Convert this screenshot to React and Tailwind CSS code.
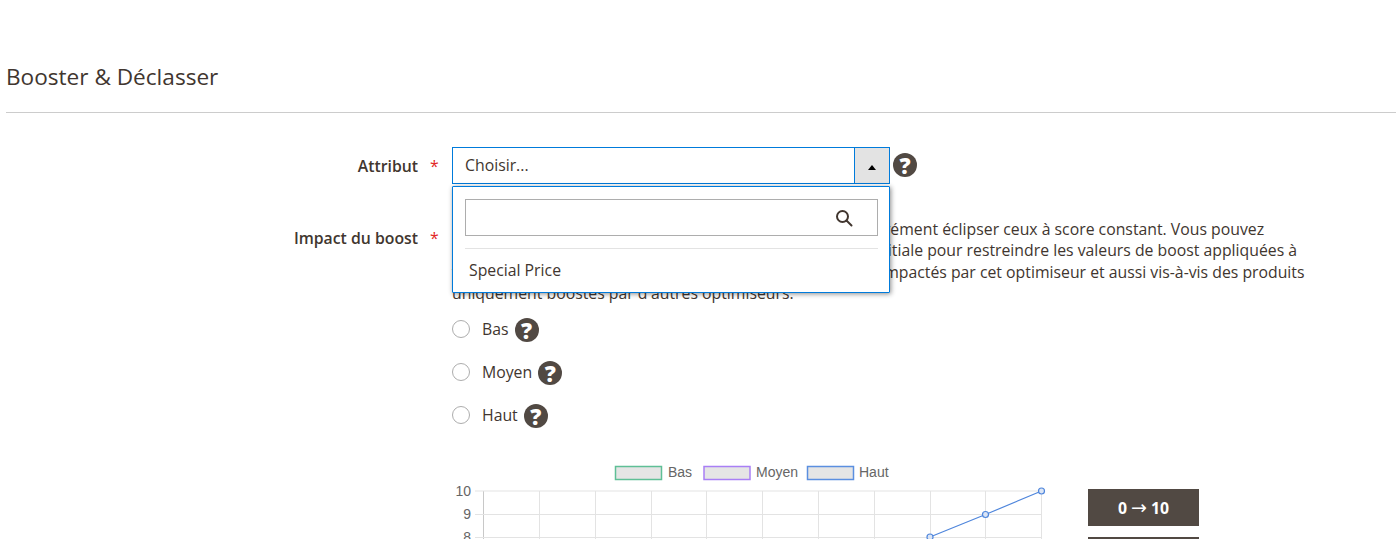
import React from "react";

const font = { fontFamily: '"Open Sans", sans-serif' };

function Help({ className = "" }) {
  return (
    <span className={`flex h-6 w-6 shrink-0 items-center justify-center rounded-full bg-[#514943] text-[22px] leading-none font-extrabold text-white ${className}`}>?</span>
  );
}

function Radio({ label, className = "" }) {
  return (
    <div className={`flex items-center ${className}`}>
      <span className="mb-[2px] h-[18px] w-[18px] rounded-full border border-[#adadad] bg-white" />
      <span className="ml-[12px]">{label}</span>
      <Help className="ml-[6px]" />
    </div>
  );
}

function Chart() {
  const vs = [483.5, 539.5, 595.5, 651.5, 706.5, 762.5, 818.5, 874.5, 930.5, 985.5, 1041.5].map((x) => x - 440);
  const hs = [491, 514.5, 537.5].map((y) => y - 460);
  const legend = [
    { x: 175.5, stroke: "#5fbf96", label: "Bas", tx: 228 },
    { x: 264, stroke: "#a97ff5", label: "Moyen", tx: 316 },
    { x: 367.5, stroke: "#5b8fe0", label: "Haut", tx: 419 },
  ];
  return (
    <svg width="610" height="79" className="block" style={{ fontFamily: '"Liberation Sans", sans-serif' }}>
      {legend.map((l) => (
        <g key={l.label}>
          <rect x={l.x} y="6.5" width="46" height="13" fill="#e5e5e5" stroke={l.stroke} strokeWidth="1.5" />
          <text x={l.tx} y="17" fontSize="14" fill="#666">{l.label}</text>
        </g>
      ))}
      {vs.map((x, i) => (
        <line key={x} x1={x} x2={x} y1="31" y2="79" stroke={i === 0 ? "#c8c8c8" : "#e3e3e3"} />
      ))}
      {hs.map((y) => (
        <line key={y} x1="35" x2="601.5" y1={y} y2={y} stroke="#e3e3e3" />
      ))}
      <text x="31" y="35.5" fontSize="14" fill="#666" textAnchor="end">10</text>
      <text x="31" y="59" fontSize="14" fill="#666" textAnchor="end">9</text>
      <text x="31" y="81.5" fontSize="14" fill="#666" textAnchor="end">8</text>
      <polyline points="490,77 545.5,54.5 601.5,31" fill="none" stroke="#4f86dc" strokeWidth="1.2" />
      {[[490, 77], [545.5, 54.5], [601.5, 31]].map(([x, y]) => (
        <circle key={x} cx={x} cy={y} r="3" fill="#dbe5f5" stroke="#4f86dc" strokeWidth="1.2" />
      ))}
    </svg>
  );
}

export default function App() {
  return (
    <div className="h-[539px] overflow-hidden bg-white text-[#41362f]" style={font}>
      <div className="pt-[60px] pl-[6px]">
        <h2 className="border-b border-[#cccccc] pb-[18px] text-[22.6px] leading-[34px] font-normal text-[#41362f]">Booster &amp; Déclasser</h2>

        <div className="mt-[34px] flex text-[15.8px]">
          <div className="flex w-[446px] justify-end pt-[8px]">
            <span className="font-semibold">Attribut</span>
            <span className="ml-[10px] w-[24px] pl-[2px] text-[#e22626]">*</span>
          </div>
          <div className="relative flex">
            <div className="flex h-[37px] w-[438px] border border-[#007bdb]">
              <div className="flex-1 pl-[12px] leading-[35px]">Choisir...</div>
              <div className="flex w-[35px] items-center justify-center border-l border-[#007bdb] bg-[#e3e3e3]">
                <span className="mt-[3px] h-0 w-0 border-x-[4px] border-b-[5px] border-x-transparent border-b-black" />
              </div>
            </div>
            <Help className="mt-[6px] ml-[3px]" />

            <div className="absolute top-[39px] left-0 z-10 h-[107px] w-[438px] rounded-[1px] border border-[#007bdb] bg-white pt-[12px] pr-[11px] pl-[12px] shadow-[1px_1px_5px_rgba(0,0,0,0.45)]">
              <div className="flex h-[37px] items-center justify-end border border-[#adadad] pr-[24px]">
                <svg width="18" height="18" viewBox="0 0 18 18" fill="none" stroke="#41362f" strokeWidth="2">
                  <circle cx="7.5" cy="7.5" r="5.5" />
                  <path d="M11.5 11.5 L16.5 16.5" strokeLinecap="round" />
                </svg>
              </div>
              <div className="mt-[12px] border-t border-[#e3e3e3] pt-[11px] pl-[4px] leading-[21px]">Special Price</div>
            </div>
          </div>
        </div>

        <div className="mt-[36px] flex text-[15.8px]">
          <div className="flex w-[446px] justify-end pt-[7px]">
            <span className="font-semibold">Impact du boost</span>
            <span className="ml-[10px] w-[24px] pl-[2px] text-[#e22626]">*</span>
          </div>
          <div className="flex-1">
            <p className="-mt-[1px] whitespace-nowrap leading-[21.4px] text-[#41362f]">
              Les optimiseurs avec score proportionnel peuvent démesurément éclipser ceux à score constant. Vous pouvez
              <br />
              utiliser la configuration suivante pour gérer la répartition initiale pour restreindre les valeurs de boost appliquées à
              <br />
              vos catalogues et rester logique vis-à-vis des produits non impactés par cet optimiseur et aussi vis-à-vis des produits
              <br />
              uniquement boostés par d'autres optimiseurs.
            </p>
            <Radio label="Bas" className="mt-[12px] h-[26px]" />
            <Radio label="Moyen" className="mt-[17px] h-[26px]" />
            <Radio label="Haut" className="mt-[17px] h-[26px]" />

            <div className="mt-[31px] flex items-start">
              <div className="-ml-[12px] w-[610px] shrink-0">
                <Chart />
              </div>
              <div className="ml-[38px] w-[111px] shrink-0 pt-[29px] text-center font-bold text-white">
                <div className="h-[37px] bg-[#514943] leading-[37px]">
                  0 <span className="text-[19px] font-normal" style={{ fontFamily: '"DejaVu Sans", sans-serif' }}>→</span> 10
                </div>
                <div className="mt-[11px] h-[37px] bg-[#514943]" />
              </div>
            </div>
          </div>
        </div>
      </div>
    </div>
  );
}
